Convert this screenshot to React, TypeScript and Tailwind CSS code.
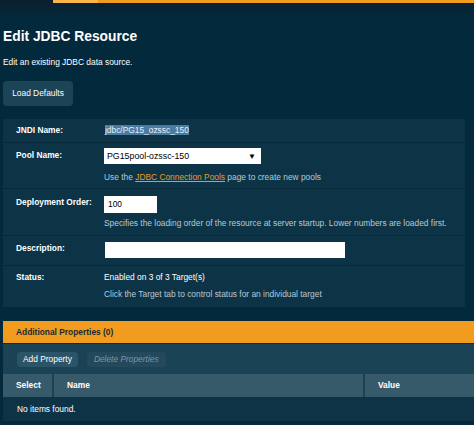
import React from "react"

const font = { fontFamily: '"Liberation Sans", Arial, sans-serif' }

function Row({ label, children, className = "" }: { label: string; children: React.ReactNode; className?: string }) {
  return (
    <div className={`flex border-b border-[#07293a] last:border-b-0 ${className}`}>
      <div className="w-[101px] shrink-0 pl-[13px] font-bold text-white">{label}</div>
      <div className="flex-1 text-white">{children}</div>
    </div>
  )
}

export default function App() {
  return (
    <div className="w-[474px] h-[425px] overflow-hidden bg-[#032a3c] text-[8.4px] leading-[11px]" style={font}>
      {/* top strip */}
      <div className="flex h-[3px]">
        <div className="w-[53px] bg-[#0b1f2c]" />
        <div className="w-[45px] bg-[#f7b54a]" />
        <div className="flex-1 bg-[#f29c1f]" />
      </div>
      <div className="h-[14px] bg-gradient-to-b from-[#0a2030] to-[#032a3c]" />

      <div className="pl-[3px]">
        <h1 className="mt-[11px] text-[13.8px] leading-[17px] font-bold text-white">Edit JDBC Resource</h1>
        <p className="mt-[12px] text-white">Edit an existing JDBC data source.</p>
        <button className="mt-[13px] h-[25px] w-[70px] rounded-[4px] bg-[#1b4457] text-white">Load Defaults</button>

        {/* form */}
        <div className="mt-[13px] mr-[9px] bg-[#0c3446]">
          <Row label="JNDI Name:" className="h-[24px] items-center">
            <span className="ml-[1px] bg-[#4a7ba3] text-[#e8f0f8]">jdbc/PG15_ozssc_150</span>
          </Row>
          <Row label="Pool Name:" className="h-[46px] pt-[7px]">
            <div className="-mt-[2px] flex h-[16px] w-[157px] items-center justify-between bg-white pl-[3px] pr-[5px] text-[8.8px] text-black">
              <span>PG15pool-ozssc-150</span>
              <span className="text-[8px]">▼</span>
            </div>
            <p className="mt-[8px] text-[#b9c9d3]">
              Use the <span className="text-[#e89b2c] underline">JDBC Connection Pools</span> page to create new pools
            </p>
          </Row>
          <Row label="Deployment Order:" className="h-[47px] pt-[8px]">
            <div className="-mt-[1px] flex h-[17px] w-[53px] items-center bg-white pl-[4px] text-black">100</div>
            <p className="mt-[5px] whitespace-nowrap text-[#b9c9d3]">
              Specifies the loading order of the resource at server startup. Lower numbers are loaded first.
            </p>
          </Row>
          <Row label="Description:" className="h-[30px] pt-[7px]">
            <div className="-mt-[1px] ml-[1px] h-[16px] w-[240px] bg-white" />
          </Row>
          <Row label="Status:" className="h-[41px] pt-[6px]">
            <p className="text-white">Enabled on 3 of 3 Target(s)</p>
            <p className="mt-[6px] text-[#b9c9d3]">Click the Target tab to control status for an individual target</p>
          </Row>
        </div>

        {/* additional properties */}
        <div className="mt-[14px] flex h-[23px] items-center border-b border-[#0c2a38] bg-[#f29c1f] pl-[13px] font-bold text-[#1b2a33]">
          Additional Properties (0)
        </div>
        <div className="flex h-[30px] items-center gap-[9px] bg-[#1b4356] pl-[14px]">
          <button className="h-[15px] rounded-[4px] bg-[#2c5468] px-[6px] text-white">Add Property</button>
          <button className="h-[15px] rounded-[4px] bg-[#25495c] px-[7px] italic text-[#7b97a6]">Delete Properties</button>
        </div>
        <div className="flex h-[23px] bg-[#375a6b] font-bold text-white">
          <div className="flex w-[51px] items-center border-r-2 border-[#1f4050] pl-[13px]">Select</div>
          <div className="flex w-[311px] items-center border-r-2 border-[#1f4050] pl-[13px]">Name</div>
          <div className="flex flex-1 items-center pl-[13px]">Value</div>
        </div>
        <div className="flex h-[24px] items-center bg-[#0e3346] pl-[14px] text-white">No items found.</div>
      </div>
    </div>
  )
}
